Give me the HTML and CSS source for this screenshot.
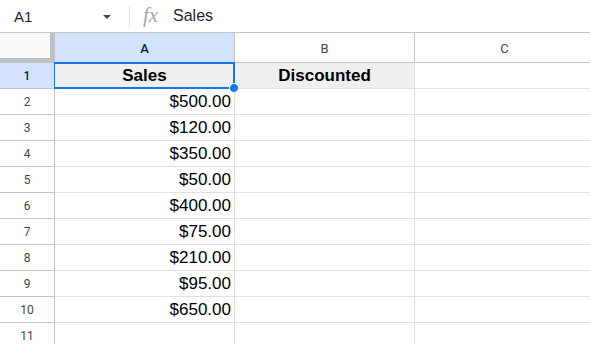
FILE: index.html
```html
<!DOCTYPE html>
<html lang="en">
<head>
    <meta charset="UTF-8">
    <meta name="viewport" content="width=device-width, initial-scale=1.0">
    <title>Sales Sheet</title>
    <link rel="stylesheet" href="styles.css">
</head>
<body>
    <div class="formula-bar">
        <div class="name-box">A1</div>
        <div class="name-arrow"></div>
        <div class="divider"></div>
        <div class="fx">fx</div>
        <div class="formula-text">Sales</div>
    </div>

    <div class="sheet">
        <div class="corner"></div>
        <div class="col-head selected">A</div>
        <div class="col-head">B</div>
        <div class="col-head">C</div>

        <div class="row-head selected">1</div>
        <div class="cell header-cell active">Sales<span class="selection"><span class="handle"></span></span></div>
        <div class="cell header-cell">Discounted</div>
        <div class="cell"></div>

        <div class="row-head">2</div><div class="cell num">$500.00</div><div class="cell"></div><div class="cell"></div>
        <div class="row-head">3</div><div class="cell num">$120.00</div><div class="cell"></div><div class="cell"></div>
        <div class="row-head">4</div><div class="cell num">$350.00</div><div class="cell"></div><div class="cell"></div>
        <div class="row-head">5</div><div class="cell num">$50.00</div><div class="cell"></div><div class="cell"></div>
        <div class="row-head">6</div><div class="cell num">$400.00</div><div class="cell"></div><div class="cell"></div>
        <div class="row-head">7</div><div class="cell num">$75.00</div><div class="cell"></div><div class="cell"></div>
        <div class="row-head">8</div><div class="cell num">$210.00</div><div class="cell"></div><div class="cell"></div>
        <div class="row-head">9</div><div class="cell num">$95.00</div><div class="cell"></div><div class="cell"></div>
        <div class="row-head">10</div><div class="cell num">$650.00</div><div class="cell"></div><div class="cell"></div>
        <div class="row-head">11</div><div class="cell"></div><div class="cell"></div><div class="cell"></div>
    </div>
</body>
</html>
```

FILE: styles.css
```css
body {
    margin: 0;
    font-family: "Liberation Sans", Arial, sans-serif;
    background-color: #fff;
    overflow: hidden;
}

.formula-bar {
    display: flex;
    align-items: center;
    height: 32px;
    border-bottom: 1px solid #c7c7c7;
    color: #1f1f1f;
}

.name-box {
    width: 89px;
    padding-left: 14px;
    font-size: 15px;
}

.name-arrow {
    width: 0;
    height: 0;
    border-left: 4px solid transparent;
    border-right: 4px solid transparent;
    border-top: 4px solid #444;
    margin-top: 1px;
}

.divider {
    width: 1px;
    height: 21px;
    background-color: #dadce0;
    margin-left: 18px;
    margin-right: 13px;
}

.fx {
    font-family: "Liberation Serif", serif;
    font-style: italic;
    font-size: 21px;
    color: #a6a6a6;
    width: 30px;
    margin-top: -2px;
}

.formula-text {
    font-size: 16px;
}

.sheet {
    display: grid;
    grid-template-columns: 55px 180px 180px 180px;
    grid-template-rows: 30px repeat(11, 26px);
}

.sheet > div {
    box-sizing: border-box;
}

.corner {
    background-color: #f8f9fa;
    border-right: 5px solid #c0c0c0;
    border-bottom: 5px solid #c0c0c0;
}

.col-head {
    display: flex;
    align-items: center;
    justify-content: center;
    border-right: 1px solid #c4c7c5;
    border-bottom: 1px solid #c4c7c5;
    font-family: Roboto, sans-serif;
    font-size: 13px;
    color: #444;
    padding-top: 2px;
}

.row-head {
    display: flex;
    align-items: center;
    justify-content: center;
    border-right: 1px solid #c4c7c5;
    border-bottom: 1px solid #c4c7c5;
    font-family: Roboto, sans-serif;
    font-size: 12px;
    color: #444;
}

.col-head.selected,
.row-head.selected {
    background-color: #d3e3fd;
    color: #0b1f3f;
    font-weight: 500;
}

.cell {
    position: relative;
    display: flex;
    align-items: center;
    border-right: 1px solid #e1e1e1;
    border-bottom: 1px solid #e1e1e1;
    font-size: 17px;
    color: #000;
    padding: 0 3px;
}

.header-cell {
    justify-content: center;
    background-color: #efefef;
    font-weight: bold;
}

.num {
    justify-content: flex-end;
}

.active {
    z-index: 2;
}

.selection {
    position: absolute;
    top: -1px;
    left: -1px;
    right: -1px;
    bottom: -1px;
    border: 2px solid #1a73e8;
    border-left-width: 1px;
}

.handle {
    position: absolute;
    right: -6px;
    bottom: -6px;
    width: 10px;
    height: 10px;
    box-sizing: border-box;
    border-radius: 50%;
    background-color: #1a73e8;
    border: 1px solid #fff;
}
```
